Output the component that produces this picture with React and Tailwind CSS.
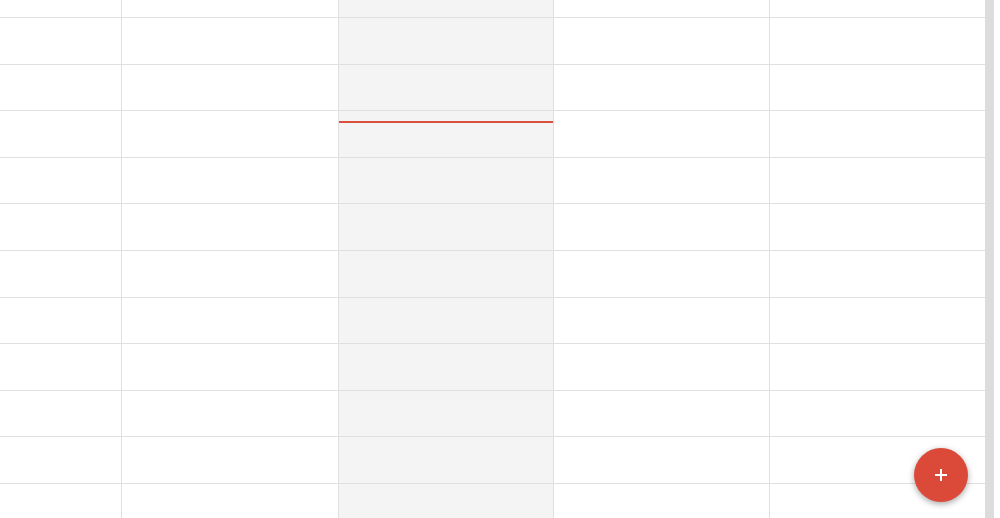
import React from "react";

const cols = [
  { w: "w-[121px]", today: false },
  { w: "w-[217px]", today: false },
  { w: "w-[215px]", today: true },
  { w: "w-[216px]", today: false },
  { w: "w-[216px]", today: false },
];

const rows = Array.from({ length: 11 });

export default function App() {
  return (
    <div className="relative flex h-[518px] w-[1000px] overflow-hidden bg-white" style={{ fontFamily: "Roboto, sans-serif" }}>
      <div className="flex h-full w-[985px]">
        {cols.map((c, ci) => (
          <div
            key={ci}
            className={`${c.w} relative flex shrink-0 flex-col ${ci > 0 ? "border-l border-[#e0e0e0]" : ""} ${c.today ? "bg-[#f4f4f4]" : ""}`}
          >
            <div className="h-[18px] shrink-0 border-b border-[#e0e0e0]" />
            {rows.map((_, ri) => (
              <div key={ri} className="h-[46.6px] shrink-0 border-b border-[#e0e0e0]" />
            ))}
            {c.today && (
              <div className="absolute left-0 right-0 top-[121px] h-[2px] bg-[#d9503f]" />
            )}
          </div>
        ))}
      </div>
      <div className="h-full w-[9px] shrink-0 bg-[#dcdcdc]" />
      <div className="h-full flex-1 bg-white" />
      <button className="absolute left-[914px] top-[448px] flex h-[54px] w-[54px] items-center justify-center rounded-full bg-[#db4a38] shadow-[0_2px_6px_rgba(0,0,0,0.35)]">
        <svg width="14" height="14" viewBox="0 0 14 14">
          <path d="M7 1v12M1 7h12" stroke="white" strokeWidth="2" />
        </svg>
      </button>
    </div>
  );
}
